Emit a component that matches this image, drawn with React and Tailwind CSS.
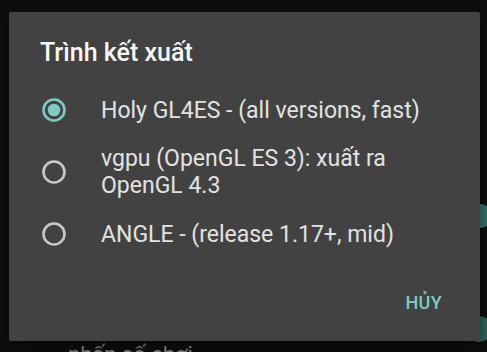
import React, { useState } from 'react';

const options = [
  { id: 'gl4es', label: 'Holy GL4ES - (all versions, fast)' },
  { id: 'vgpu', label: 'vgpu (OpenGL ES 3): xuất ra OpenGL 4.3' },
  { id: 'angle', label: 'ANGLE - (release 1.17+, mid)' },
];

function Radio({ checked }) {
  return (
    <svg width="26" height="26" viewBox="0 0 26 26" className="shrink-0">
      <circle
        cx="13"
        cy="13"
        r="10.5"
        fill="none"
        stroke={checked ? '#80cbc4' : '#c9c9c9'}
        strokeWidth="2.6"
      />
      {checked && <circle cx="13" cy="13" r="6.3" fill="#80cbc4" />}
    </svg>
  );
}

export default function App() {
  const [selected, setSelected] = useState('gl4es');

  return (
    <div
      className="relative w-[487px] h-[352px] overflow-hidden bg-[#0e0e0e]"
      style={{ fontFamily: 'Roboto, "Noto Sans", sans-serif' }}
    >
      {/* page behind the dialog */}
      <div className="absolute left-[468px] top-[204px] w-[24px] h-[24px] rounded-full bg-[#3a7a70]" />
      <div className="absolute left-[466px] top-[316px] w-[26px] h-[26px] rounded-full bg-[#35685f]" />
      <div className="absolute left-[68px] top-[342px] text-[22px] leading-[26px] text-[#8a8a8a]">
        nhấn số chơi
      </div>

      <div className="relative z-10 ml-[9px] mt-[12px] w-[471px] h-[329px] bg-[#424242] rounded-[2px] shadow-[0_4px_16px_rgba(0,0,0,0.6)] flex flex-col">
        <div className="pt-[26px] pl-[31px]">
          <div className="text-[25px] leading-[30px] font-medium text-[#f7f7f7]">
            Trình kết xuất
          </div>
        </div>

        <div className="mt-[18px] flex flex-col">
          {options.map((o) => (
            <div
              key={o.id}
              onClick={() => setSelected(o.id)}
              className={`flex items-center pl-[32px] pr-[20px] cursor-pointer ${
                o.id === 'vgpu' ? 'h-[76px]' : 'h-[48px]'
              }`}
            >
              <Radio checked={selected === o.id} />
              <div className="ml-[34px] text-[23px] leading-[27px] text-[#e2e2e2] w-[345px]">
                {o.label}
              </div>
            </div>
          ))}
        </div>

        <div className="mt-auto mb-[26px] flex justify-end pr-[38px]">
          <button className="text-[18px] leading-[24px] font-medium text-[#80cbc4] tracking-[0.3px]">
            HỦY
          </button>
        </div>
      </div>
    </div>
  );
}
